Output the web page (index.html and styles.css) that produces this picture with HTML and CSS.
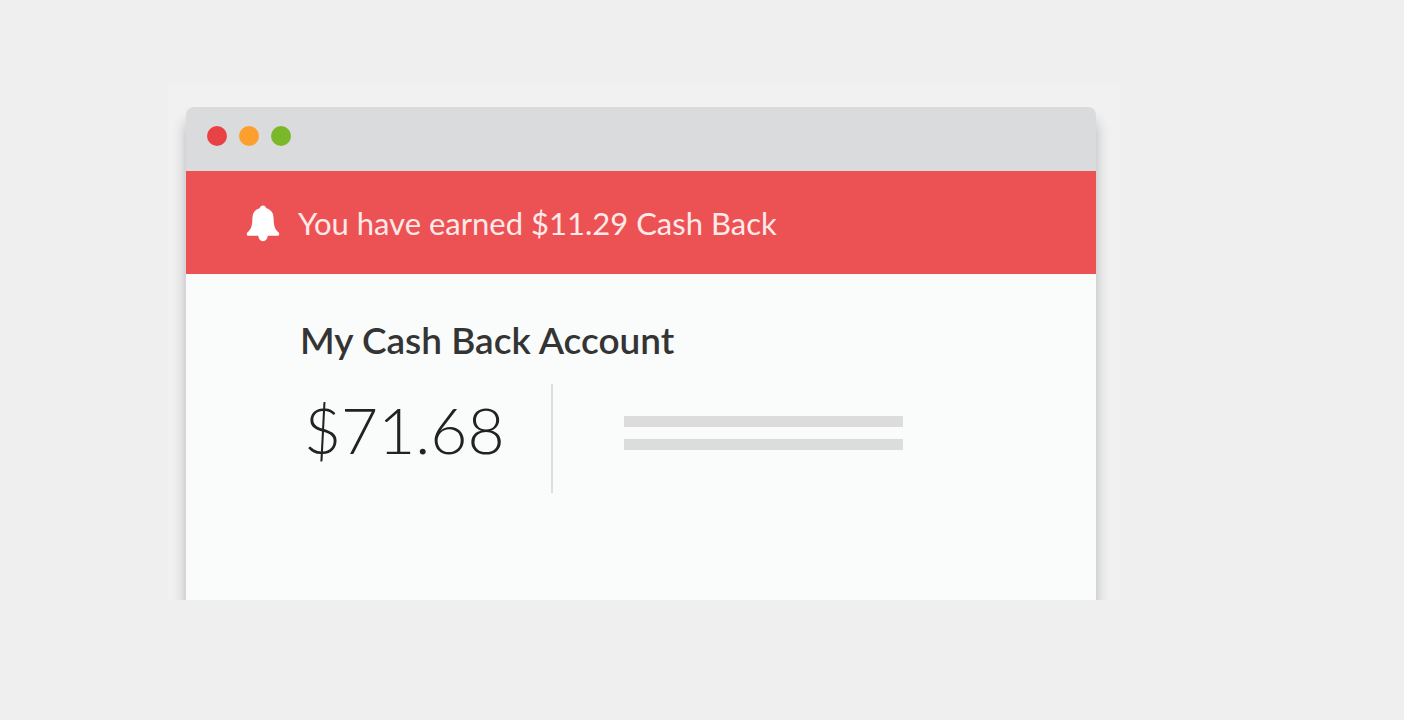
FILE: index.html
```
<!DOCTYPE html>
<html lang="en">
<head>
<meta charset="utf-8">
<title>My Cash Back Account</title>
<link rel="stylesheet" href="styles.css">
</head>
<body class="page">
<main class="stage">
  <section class="window">
    <header class="titlebar">
      <span class="dot dot-red"></span>
      <span class="dot dot-orange"></span>
      <span class="dot dot-green"></span>
    </header>
    <div class="notice" role="status">
      <svg class="bell" viewBox="0 0 34 38" aria-hidden="true">
        <path fill="#fff" d="M17 1.500C15.200 1.500 14.300 2.800 13.600 4.200C8.800 5.600 6.600 9 6.400 14C6.200 21.500 5.500 25 1.300 28.600C.300 29.700.700 31.800 2.500 31.800H12.200C12.700 35.200 14.200 37.200 17 37.200S21.300 35.200 21.800 31.800H31.500C33.300 31.800 33.700 29.700 32.700 28.600C28.500 25 27.800 21.500 27.600 14C27.400 9 25.200 5.600 20.400 4.200C19.700 2.800 18.800 1.500 17 1.500Z"/>
      </svg>
      <p class="notice-text">You have earned $11.29 Cash Back</p>
    </div>
    <div class="account">
      <h1 class="heading">My Cash Back Account</h1>
      <div class="summary">
        <p class="amount">$71.68</p>
        <div class="details">
          <span class="line"></span>
          <span class="line"></span>
        </div>
      </div>
    </div>
  </section>
</main>
</body>
</html>
```
FILE: styles.css
```
* {
  box-sizing: border-box;
}

.page {
  display: flex;
  min-height: 100vh;
  margin: 0;
  padding: 83px 284px 120px 168px;
  background: #efefef;
  font-family: Lato, "Open Sans", sans-serif;
}

.stage {
  display: flex;
  flex: 1;
  padding: 24px 24px 0 18px;
  overflow: hidden;
  background: #f1f1f1;
}

.window {
  flex: 1;
  border-radius: 8px 8px 0 0;
  background: #fafcfb;
  box-shadow: 0 14px 14px rgba(40, 40, 60, 0.3);
}

.titlebar {
  display: flex;
  gap: 12px;
  height: 64px;
  padding: 19px 21px;
  border-radius: 8px 8px 0 0;
  background: #dadbdd;
}

.dot {
  width: 20px;
  height: 20px;
  border-radius: 50%;
}

.dot-red {
  background: #e94245;
}

.dot-orange {
  background: #fd9f2e;
}

.dot-green {
  background: #7ab829;
}

.notice {
  display: flex;
  align-items: center;
  gap: 18px;
  height: 103px;
  padding: 0 60px;
  background: #ec5254;
  color: #ffe9e9;
}

.bell {
  width: 34px;
  height: 38px;
}

.notice-text {
  margin: 0;
  font-size: 31px;
  line-height: 40px;
}

.account {
  padding: 46px 114px;
}

.heading {
  margin: 0;
  color: #343434;
  font-size: 37px;
  font-weight: 600;
  line-height: 40px;
}

.summary {
  display: flex;
  align-items: flex-start;
  margin-top: 24px;
}

.amount {
  width: 251px;
  margin: 0;
  padding-left: 4px;
  color: #222;
  font-size: 64px;
  font-weight: 300;
  line-height: 92px;
}

.details {
  display: flex;
  flex-direction: column;
  justify-content: center;
  gap: 12px;
  height: 109px;
  padding: 0 0 12px 71px;
  border-left: 2px solid #dedede;
}

.line {
  width: 279px;
  height: 11px;
  background: #dcdcdc;
}
```
